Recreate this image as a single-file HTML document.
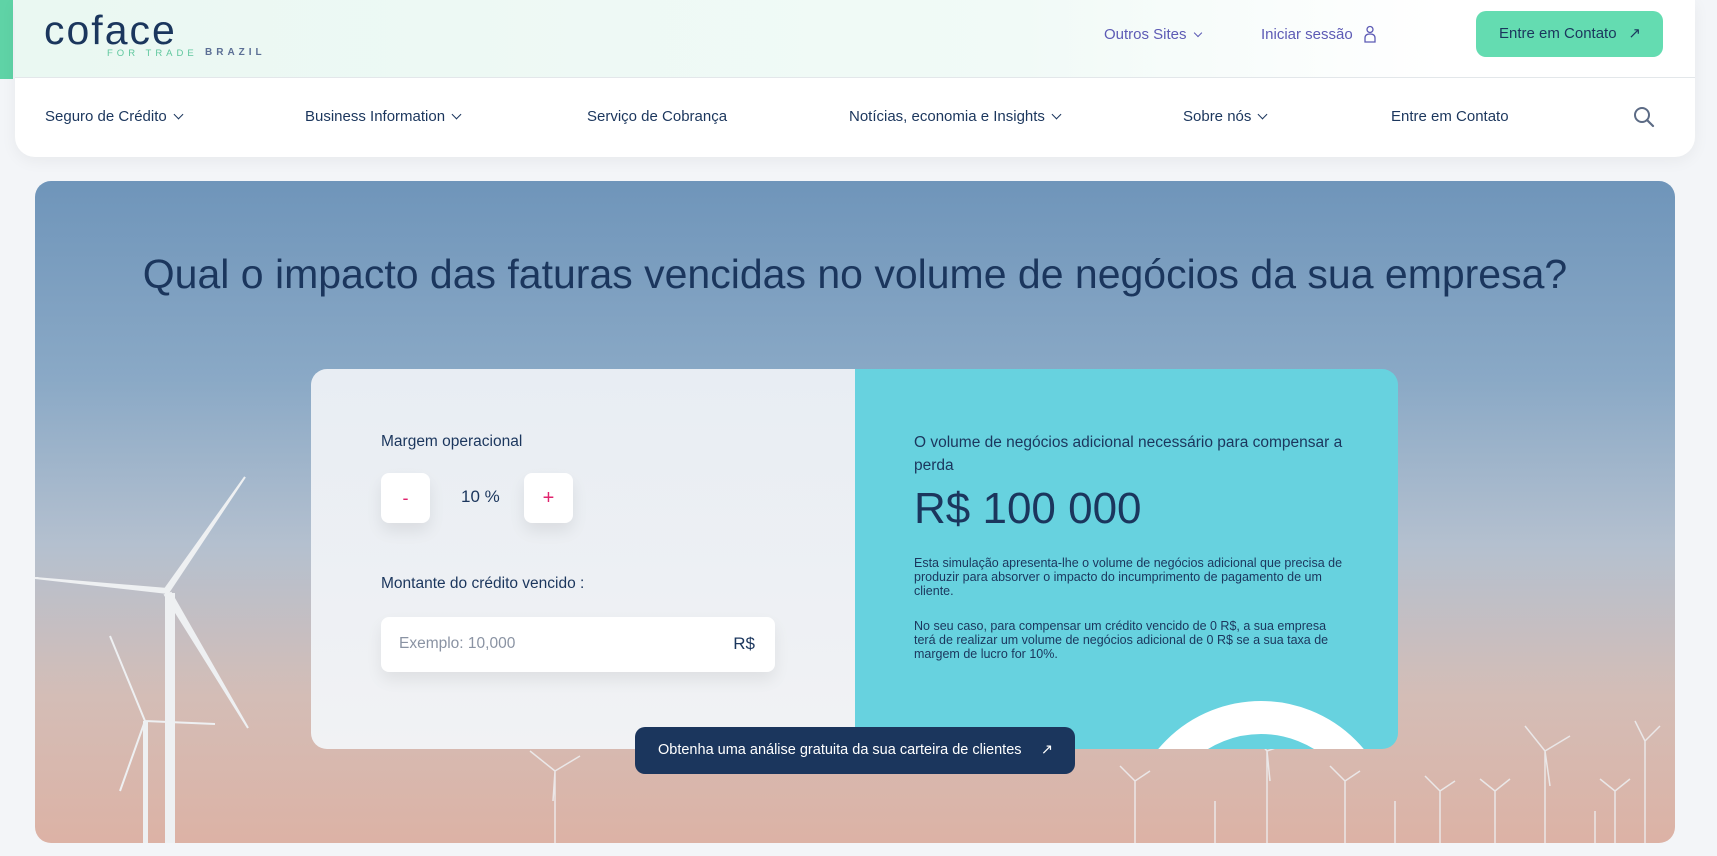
<!DOCTYPE html>
<html><head><meta charset="utf-8"><style>
*{margin:0;padding:0;box-sizing:border-box}
html,body{width:1717px;height:856px;overflow:hidden}
body{background:#f3f5f8;font-family:"Liberation Sans",sans-serif;color:#1b365d;position:relative}
.abs{position:absolute}
.hdr{left:15px;top:0;width:1680px;height:157px;background:#fff;border-radius:0 0 20px 20px;box-shadow:0 4px 16px rgba(0,0,0,.05);overflow:hidden}
.top{left:0;top:0;width:1680px;height:78px;background:linear-gradient(90deg,#eaf8f2 0%,#f1faf7 60%,#fff 85%);border-bottom:1px solid #e3e7ea}
.nav{font-size:15px;color:#1b365d;top:108px}
.chev{display:inline-block;width:7px;height:7px;border-right:1.3px solid #1b365d;border-bottom:1.3px solid #1b365d;transform:rotate(45deg);margin-left:8px;position:relative;top:-3px}
.hero{left:35px;top:181px;width:1640px;height:662px;border-radius:16px;overflow:hidden;background:linear-gradient(180deg,#6f95ba 0%,#8aa9c6 30%,#b4c0cf 55%,#d4bdb6 78%,#dcb2a5 100%)}
.card{left:311px;top:369px;width:1087px;height:380px;border-radius:16px;overflow:hidden}
.btn{background:#fff;border-radius:8px;box-shadow:0 8px 16px rgba(0,0,0,.08);width:49px;height:50px;color:#e0246e;font-size:18px;text-align:center;line-height:50px}
</style></head><body>
<div class="abs" style="left:0;top:0;width:13px;height:79px;background:#5fd3a6"></div>
<div class="abs hdr">
 <div class="abs top"></div>
 <div class="abs" style="left:29px;top:10px;font-size:41px;line-height:41px;letter-spacing:2px;color:#1b365d">coface</div>
 <div class="abs" style="left:92px;top:49px;font-size:9.5px;line-height:10px;letter-spacing:4px;color:#5fc79e">FOR TRADE</div>
 <div class="abs" style="left:190px;top:48px;font-size:10px;line-height:10px;letter-spacing:4px;color:#5c6f95;font-weight:bold">BRAZIL</div>
 <div class="abs" style="left:1089px;top:26px;font-size:15px;color:#5d5bb5">Outros Sites<span class="chev" style="border-color:#5d5bb5;width:6px;height:6px"></span></div>
 <div class="abs" style="left:1246px;top:26px;font-size:15px;color:#5d5bb5">Iniciar sessão</div>
 <svg class="abs" style="left:1348px;top:25px" width="14" height="18" viewBox="0 0 14 18"><circle cx="7" cy="4.5" r="3" fill="none" stroke="#5d5bb5" stroke-width="1.3"/><path d="M2 17 V13 Q2 9 7 9 Q12 9 12 13 V17 Z" fill="none" stroke="#5d5bb5" stroke-width="1.3"/></svg>
 <div class="abs" style="left:1461px;top:11px;width:187px;height:46px;background:#64dcb1;border-radius:10px;font-size:15px;line-height:46px;padding-left:23px;color:#1b365d">Entre em Contato<span style="position:absolute;right:22px;font-size:15px">↗</span></div>
 <div class="abs nav" style="left:30px">Seguro de Crédito<span class="chev"></span></div>
 <div class="abs nav" style="left:290px">Business Information<span class="chev"></span></div>
 <div class="abs nav" style="left:572px">Serviço de Cobrança</div>
 <div class="abs nav" style="left:834px">Notícias, economia e Insights<span class="chev"></span></div>
 <div class="abs nav" style="left:1168px">Sobre nós<span class="chev"></span></div>
 <div class="abs nav" style="left:1376px">Entre em Contato</div>
 <svg class="abs" style="left:1618px;top:106px" width="22" height="22" viewBox="0 0 22 22"><circle cx="9" cy="9" r="7" fill="none" stroke="#5c6b85" stroke-width="2"/><path d="M14 14 L20 20" stroke="#5c6b85" stroke-width="2.2" stroke-linecap="round"/></svg>
</div>
<div class="abs hero">
 <svg class="abs" style="left:0;top:0" width="1640" height="662" viewBox="0 0 1640 662">
  <g stroke="#eef0f2" fill="#eef0f2">
   <rect x="130" y="412" width="10" height="260" stroke="none"/>
   <path d="M133 412 L0 397 L133 408 Z M133 412 L210 296 L130 408 Z M136 412 L213 547 L130 414 Z" stroke-width="2"/>
   <rect x="108" y="540" width="5" height="130" stroke="none"/>
   <path d="M110 540 L75 455 M110 540 L85 610 M110 540 L180 543" stroke-width="2" fill="none"/>
   <g stroke-width="1.5" fill="none" opacity=".85">
    <path d="M520 590 V662 M520 590 L495 570 M520 590 L545 575 M520 590 L518 620"/>
    <path d="M1232 570 V662 M1232 570 L1210 545 M1232 570 L1260 560 M1232 570 L1235 600"/>
    <path d="M1510 570 V662 M1510 570 L1490 545 M1510 570 L1535 555 M1510 570 L1515 605"/>
    <path d="M1610 560 V662 M1610 560 L1600 540 M1610 560 L1625 545"/>
    <path d="M1100 600 V662 M1100 600 L1085 585 M1100 600 L1115 590"/>
    <path d="M1310 600 V662 M1310 600 L1295 585 M1310 600 L1325 590"/>
    <path d="M1405 610 V662 M1405 610 L1390 595 M1405 610 L1420 600"/>
    <path d="M1460 610 V662 M1460 610 L1445 598 M1460 610 L1475 598"/>
    <path d="M1580 610 V662 M1580 610 L1565 598 M1580 610 L1595 598"/>
    <path d="M1180 620 V662 M1360 620 V662 M1560 630 V662"/>
   </g>
  </g>
 </svg>
 <div class="abs" style="left:0;top:70px;width:1640px;text-align:center;font-size:41px;color:#1b365d">Qual o impacto das faturas vencidas no volume de negócios da sua empresa?</div>
</div>
<div class="abs card">
 <div class="abs" style="left:0;top:0;width:544px;height:380px;background:linear-gradient(180deg,#e8edf3,#f1f2f4)"></div>
 <div class="abs" style="left:544px;top:0;width:543px;height:380px;background:#67d2df;overflow:hidden">
  <div class="abs" style="left:272px;top:332px;width:268px;height:268px;border-radius:50%;border:33px solid #fff"></div>
 </div>
 <div class="abs" style="left:70px;top:64px;font-size:15.5px">Margem operacional</div>
 <div class="abs btn" style="left:70px;top:104px">-</div>
 <div class="abs" style="left:150px;top:118px;font-size:17px">10 %</div>
 <div class="abs btn" style="left:213px;top:104px;font-size:20px">+</div>
 <div class="abs" style="left:70px;top:206px;font-size:15.5px">Montante do crédito vencido :</div>
 <div class="abs" style="left:70px;top:248px;width:394px;height:55px;background:#fff;border-radius:8px;box-shadow:0 8px 16px rgba(0,0,0,.07)">
  <span class="abs" style="left:18px;top:18px;font-size:15.5px;color:#8a93a3">Exemplo: 10,000</span>
  <span class="abs" style="right:20px;top:17px;font-size:17px;color:#1b365d">R$</span>
 </div>
 <div class="abs" style="left:603px;top:62px;width:430px;font-size:15.5px;line-height:23px">O volume de negócios adicional necessário para compensar a perda</div>
 <div class="abs" style="left:603px;top:115px;font-size:44px">R$ 100 000</div>
 <div class="abs" style="left:603px;top:187px;width:430px;font-size:12.5px;line-height:14px">Esta simulação apresenta-lhe o volume de negócios adicional que precisa de produzir para absorver o impacto do incumprimento de pagamento de um cliente.</div>
 <div class="abs" style="left:603px;top:250px;width:430px;font-size:12.5px;line-height:14px">No seu caso, para compensar um crédito vencido de 0 R$, a sua empresa terá de realizar um volume de negócios adicional de 0 R$ se a sua taxa de margem de lucro for 10%.</div>
</div>
<div class="abs" style="left:635px;top:727px;width:440px;height:47px;background:#1b365d;border-radius:10px;color:#fff;font-size:14.5px;line-height:47px;padding-left:23px">Obtenha uma análise gratuita da sua carteira de clientes<span style="position:absolute;right:22px">↗</span></div>
</body></html>
